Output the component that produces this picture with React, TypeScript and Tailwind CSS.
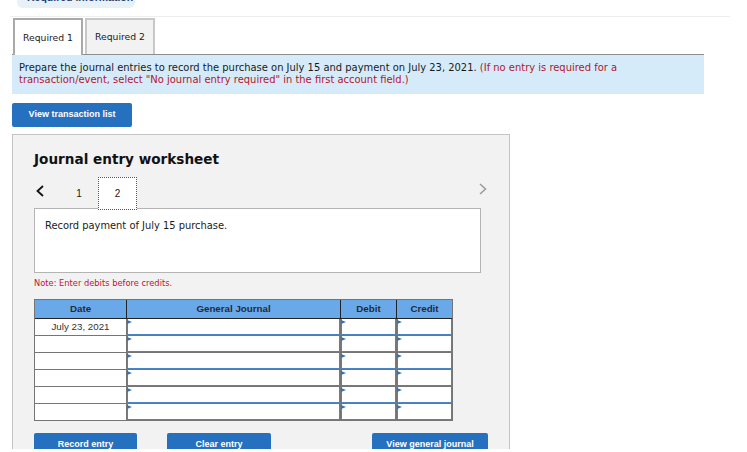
// Journal entry worksheet, "Required 1" tab
const ROWS = ["July 23, 2021", "", "", "", "", ""];

function EntryCell({ last }: { last?: boolean }) {
  return (
    <td className={`relative h-[17px] border-b border-[#757575] p-0 ${last ? "" : "border-r"}`}>
      <div className="h-[16px] border-x border-b border-[#4a84c4] bg-white" />
      <span className="absolute left-0 top-[1px] h-0 w-0 border-y-[2.5px] border-l-[5px] border-y-transparent border-l-[#2a75c4]" />
    </td>
  );
}

function ActionButton({ label, className }: { label: string; className: string }) {
  return (
    <button className={`${className} h-[24px] rounded-[2px] bg-[#2570bf] text-[9px] font-bold text-white`}>
      {label}
    </button>
  );
}

export default function App() {
  return (
    <div className="h-[449px] w-[747px] overflow-hidden bg-white font-['Liberation_Sans',sans-serif] text-[#1a1a1a]">
      <div className="ml-[17px] h-[8px] w-[118px] overflow-hidden rounded-b-[6px] bg-[#e8f0f8]">
        <div className="-mt-[9px] whitespace-nowrap pl-[10px] text-[10.5px] font-bold leading-[13px] text-[#1d3f72]">Required information</div>
      </div>
      <div className="ml-[10px] mt-[8px] h-[1px] w-[720px] bg-[#eeeeee]" />

      <div className="ml-[12px] w-[692px]">
        <div className="flex h-[38px] gap-[2px] border-b border-[#8f8f8f] pl-[1px] pt-[1px] font-['DejaVu_Sans',sans-serif] text-[9.25px]">
          <div className="-mb-[1px] flex h-[37px] w-[70px] items-center justify-center border-2 border-b-0 border-[#a9a9a9] bg-white">Required 1</div>
          <div className="flex h-[36px] w-[70px] items-center justify-center border-2 border-b-0 border-[#c8c8c8] bg-[#f2f2f2]">Required 2</div>
        </div>
        <div className="h-[39px] bg-[#d6ebf9] px-[7px] pt-[7px] font-['DejaVu_Sans',sans-serif] text-[9.95px] leading-[12px]">
          Prepare the journal entries to record the purchase on July 15 and payment on July 23, 2021.{" "}
          <span className="text-[#b5142a]">
            (If no entry is required for a transaction/event, select "No journal entry required" in the first account field.)
          </span>
        </div>

        <button className="mt-[9px] block h-[24px] w-[120px] rounded-[2px] bg-[#2570bf] text-[9px] font-bold text-white">
          View transaction list
        </button>

        <div className="mt-[7px] h-[340px] w-[498px] border border-[#c4c4c4] bg-[#f2f2f2] pl-[21px] pt-[15px]">
          <h2 className="font-['DejaVu_Sans',sans-serif] text-[13.6px] font-bold leading-[18px] text-[#111111]">Journal entry worksheet</h2>

          <div className="relative mt-[9px] flex h-[32px] w-[447px] items-center text-[10px]">
            <svg width="10" height="14" viewBox="0 0 10 14" className="ml-[1px] mt-[-5px]">
              <path d="M8 2 L2.5 7 L8 12" fill="none" stroke="#111111" strokeWidth="1.8" />
            </svg>
            <span className="ml-[29px] w-[10px] text-center">1</span>
            <div className="z-10 ml-[14px] flex h-[33px] w-[39px] items-center justify-center border border-dotted border-[#2a5f9e] bg-white">2</div>
            <svg width="10" height="14" viewBox="0 0 10 14" className="absolute right-[-7px] top-[5px]">
              <path d="M2 2 L7.5 7 L2 12" fill="none" stroke="#9a9a9a" strokeWidth="1.5" />
            </svg>
          </div>

          <div className="-mt-[1px] h-[65px] w-[447px] border border-[#b4b4b4] bg-white pl-[10px] pt-[10px] font-['DejaVu_Sans',sans-serif] text-[9.9px] leading-[14px]">
            Record payment of July 15 purchase.
          </div>

          <p className="mt-[4px] font-['DejaVu_Sans',sans-serif] text-[8.3px] leading-[12px] text-[#c4122f]">Note: Enter debits before credits.</p>

          <table className="mt-[10px] w-[419px] table-fixed border-separate border-spacing-0 border-x border-t border-[#757575] text-[9.75px]">
            <thead>
              <tr className="bg-[#6aa9e9] font-bold text-[#1f2a3a]">
                <th className="h-[19px] w-[92px] border-r border-b border-[#222222] p-0">Date</th>
                <th className="h-[19px] w-[214px] border-r border-b border-[#222222] p-0">General Journal</th>
                <th className="h-[19px] w-[56px] border-r border-b border-[#222222] p-0">Debit</th>
                <th className="h-[19px] border-b border-[#222222] p-0">Credit</th>
              </tr>
            </thead>
            <tbody>
              {ROWS.map((date, i) => (
                <tr key={i}>
                  <td className="h-[17px] border-r border-b border-[#757575] bg-white p-0 text-center leading-[14px] text-[#333333]">{date}</td>
                  <EntryCell />
                  <EntryCell />
                  <EntryCell last />
                </tr>
              ))}
            </tbody>
          </table>

          <div className="mt-[12px] flex items-start">
            <ActionButton label="Record entry" className="w-[103px]" />
            <ActionButton label="Clear entry" className="ml-[30px] w-[104px]" />
            <ActionButton label="View general journal" className="ml-[101px] w-[116px]" />
          </div>
        </div>
      </div>
    </div>
  );
}
